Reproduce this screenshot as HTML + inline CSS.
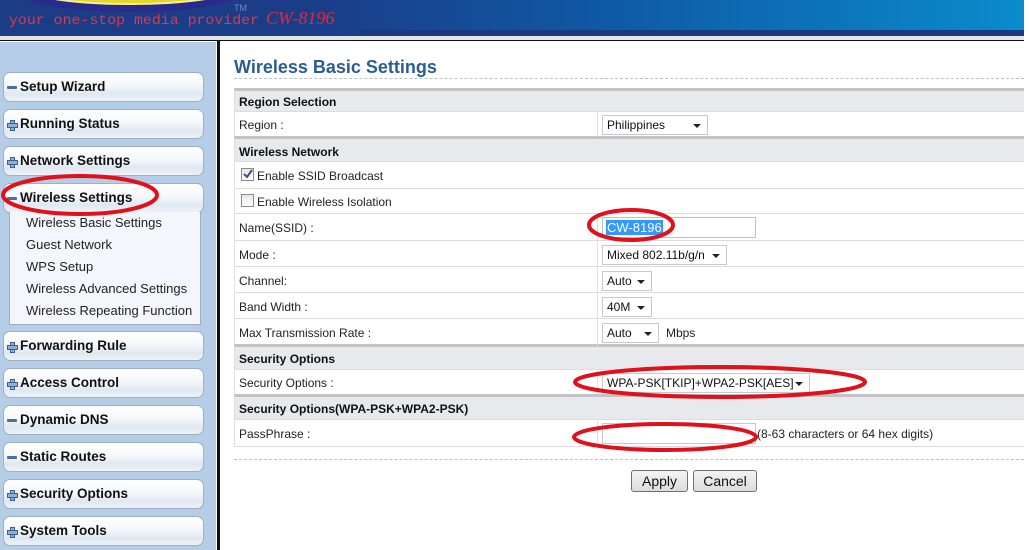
<!DOCTYPE html>
<html><head><meta charset="utf-8">
<style>
*{margin:0;padding:0;box-sizing:border-box}
body{width:1030px;height:550px;overflow:hidden;background:#fff;font-family:"Liberation Sans",Arial,sans-serif;position:relative}
.hdr{position:absolute;left:0;top:0;width:1024px;height:36px;background:linear-gradient(90deg,#1c3c86 0%,#1b3d88 30%,#0f5aa5 60%,#0a8ccc 100%)}
.hdr .strip{position:absolute;left:360px;right:0;top:30px;height:6px;background:#1a3a80}
.abs{position:absolute}
.side{position:absolute;left:0;top:42px;width:216px;height:508px;background:#b5cde6}
.vline{position:absolute;left:217px;top:41px;width:3px;height:509px;background:#111}
.topline{position:absolute;left:0;top:36px;width:1024px;height:5px;background:#e4e4e4;border-bottom:1px solid #111}
.btn{position:absolute;left:3px;width:201px;height:30px;border:1px solid #9fb0c2;border-radius:7px;background:linear-gradient(#fff 0%,#f4f7fa 45%,#dfe8f1 75%,#eef2f6 100%);font-weight:bold;font-size:13.5px;color:#111;line-height:28px;padding-left:16px}
.btn i{position:absolute;left:3px;top:13px;width:10px;height:3px;background:#4a6f99;border-radius:1px}
.btn b{position:absolute;left:3px;top:10px;width:9px;height:9px}
.btn b:before{content:"";position:absolute;left:3px;top:0;width:3px;height:9px;background:#8fb0d6;border:1px solid #3c618c}
.btn b:after{content:"";position:absolute;left:0;top:3px;width:9px;height:3px;background:#8fb0d6;border:1px solid #3c618c}
.sub{position:absolute;left:9px;top:212px;width:192px;height:113px;background:#f3f6fa;border:1px solid #9fb0c2;border-top:none}
.sub div{font-size:13px;color:#222;height:22px;line-height:22px;padding-left:16px}
.title{position:absolute;left:234px;top:57px;font-size:18px;font-weight:bold;color:#2a5d94}
.dash{position:absolute;left:234px;width:790px;border-top:1px dashed #b8c4cc}
.row{position:absolute;left:234px;width:790px;font-size:12px;color:#222;border-bottom:1px solid #dcdcdc;border-left:1px solid #e0e0e0}
.row.h{background:#e8e9ec;border-top:3px solid #c3c3c6;font-weight:bold;color:#111}
.row span{position:absolute;left:4px}
.vc{position:absolute;left:597px;width:1px;background:#e0e0e0}
.sel{position:absolute;height:20px;border:1px solid #c9c9c9;background:#fff;font-size:12px;line-height:18px;padding-left:4px;color:#111}
.sel:after{content:"";position:absolute;right:6px;top:8px;border-left:4px solid transparent;border-right:4px solid transparent;border-top:4px solid #222}
.cb{position:absolute;width:13px;height:13px;border:1px solid #8a8a8a;background:linear-gradient(#e8e8e8,#fff)}
.bt{position:absolute;top:470px;height:22px;border:1px solid #707070;border-radius:3px;background:linear-gradient(#f4f4f4,#dcdcdc);font-size:14px;text-align:center;line-height:20px;color:#111}
</style></head><body>
<div class="hdr"><div class="strip"></div>
<svg class="abs" style="left:0;top:0" width="360" height="36">
<ellipse cx="130" cy="-8" rx="112" ry="20" fill="#2a2a8a"/>
<ellipse cx="130" cy="-10" rx="98" ry="14" fill="#e8d52a" stroke="#f2f0a0" stroke-width="2"/>
<text x="234" y="11" font-size="9" fill="#6a8ac8" font-family="Liberation Sans">TM</text>
<text x="9" y="24" font-size="14" fill="#d83a4a" font-family="Liberation Mono" textLength="250" lengthAdjust="spacingAndGlyphs">your one-stop media provider</text>
<text x="266" y="24" font-size="18" fill="#e0283a" font-style="italic" font-family="Liberation Serif">CW-8196</text>
</svg></div>
<div class="topline"></div>
<div class="side"></div>
<div class="vline"></div>

<div class="btn" style="top:72px"><i></i>Setup Wizard</div>
<div class="btn" style="top:109px"><b></b>Running Status</div>
<div class="btn" style="top:146px"><b></b>Network Settings</div>
<div class="btn" style="top:183px"><i></i>Wireless Settings</div>
<div class="sub"><div>Wireless Basic Settings</div><div>Guest Network</div><div>WPS Setup</div><div>Wireless Advanced Settings</div><div>Wireless Repeating Function</div></div>
<div class="btn" style="top:331px"><b></b>Forwarding Rule</div>
<div class="btn" style="top:368px"><b></b>Access Control</div>
<div class="btn" style="top:405px"><i></i>Dynamic DNS</div>
<div class="btn" style="top:442px"><i></i>Static Routes</div>
<div class="btn" style="top:479px"><b></b>Security Options</div>
<div class="btn" style="top:516px"><b></b>System Tools</div>

<div class="title">Wireless Basic Settings</div>
<div class="dash" style="top:78px"></div>

<div class="row h" style="top:88px;height:24px"><span style="top:4px">Region Selection</span></div>
<div class="row" style="top:112px;height:26px"><span style="top:6px">Region :</span></div>
<div class="row h" style="top:136px;height:26px"><span style="top:6px">Wireless Network</span></div>
<div class="row" style="top:162px;height:27px"><span style="top:7px;left:22px">Enable SSID Broadcast</span></div>
<div class="row" style="top:189px;height:25px"><span style="top:6px;left:22px">Enable Wireless Isolation</span></div>
<div class="row" style="top:214px;height:27px"><span style="top:7px">Name(SSID) :</span></div>
<div class="row" style="top:241px;height:26px"><span style="top:7px">Mode :</span></div>
<div class="row" style="top:267px;height:26px"><span style="top:7px">Channel:</span></div>
<div class="row" style="top:293px;height:26px"><span style="top:7px">Band Width :</span></div>
<div class="row" style="top:319px;height:27px"><span style="top:7px">Max Transmission Rate :</span></div>
<div class="row h" style="top:344px;height:26px"><span style="top:5px">Security Options</span></div>
<div class="row" style="top:370px;height:26px"><span style="top:6px">Security Options :</span></div>
<div class="row h" style="top:394px;height:26px"><span style="top:5px">Security Options(WPA-PSK+WPA2-PSK)</span></div>
<div class="row" style="top:420px;height:27px"><span style="top:7px">PassPhrase :</span></div>
<div class="vc" style="top:112px;height:25px"></div>
<div class="vc" style="top:214px;height:132px"></div>
<div class="vc" style="top:370px;height:25px"></div>
<div class="vc" style="top:420px;height:27px"></div>

<div class="cb" style="left:241px;top:168px"></div>
<svg class="abs" style="left:242px;top:168px" width="12" height="12"><path d="M2 6 L5 9 L10 2" stroke="#3a4f8a" stroke-width="2" fill="none"/></svg>
<div class="cb" style="left:241px;top:194px"></div>

<div class="sel" style="left:602px;top:115px;width:106px">Philippines</div>
<div class="abs" style="left:602px;top:217px;width:154px;height:21px;border:1px solid #b0c4d8;background:#fff"><span style="position:absolute;left:3px;top:2px;background:#3399ff;color:#fff;font-size:13px;padding:0 1px;line-height:15px">CW-8196</span></div>
<div class="sel" style="left:602px;top:245px;width:125px">Mixed 802.11b/g/n</div>
<div class="sel" style="left:602px;top:271px;width:50px">Auto</div>
<div class="sel" style="left:602px;top:297px;width:50px">40M</div>
<div class="sel" style="left:602px;top:323px;width:57px">Auto</div>
<div class="abs" style="left:666px;top:326px;font-size:12px;color:#222">Mbps</div>
<div class="sel" style="left:602px;top:373px;width:208px">WPA-PSK[TKIP]+WPA2-PSK[AES]</div>
<div class="abs" style="left:602px;top:423px;width:154px;height:21px;border:1px solid #c9c9c9;background:#fff"></div>
<div class="abs" style="left:757px;top:427px;font-size:12px;color:#222">(8-63 characters or 64 hex digits)</div>

<div class="dash" style="top:459px"></div>
<div class="bt" style="left:631px;width:57px">Apply</div>
<div class="bt" style="left:693px;width:64px">Cancel</div>

<svg class="abs" style="left:0;top:0" width="1030" height="550">
<g fill="none" stroke="#e0101c" stroke-width="4">
<ellipse cx="80" cy="195" rx="77" ry="19"/>
<ellipse cx="631" cy="225" rx="42" ry="15"/>
<ellipse cx="720" cy="382" rx="145" ry="15"/>
<ellipse cx="665" cy="437" rx="91" ry="13"/>
</g></svg>
</body></html>
